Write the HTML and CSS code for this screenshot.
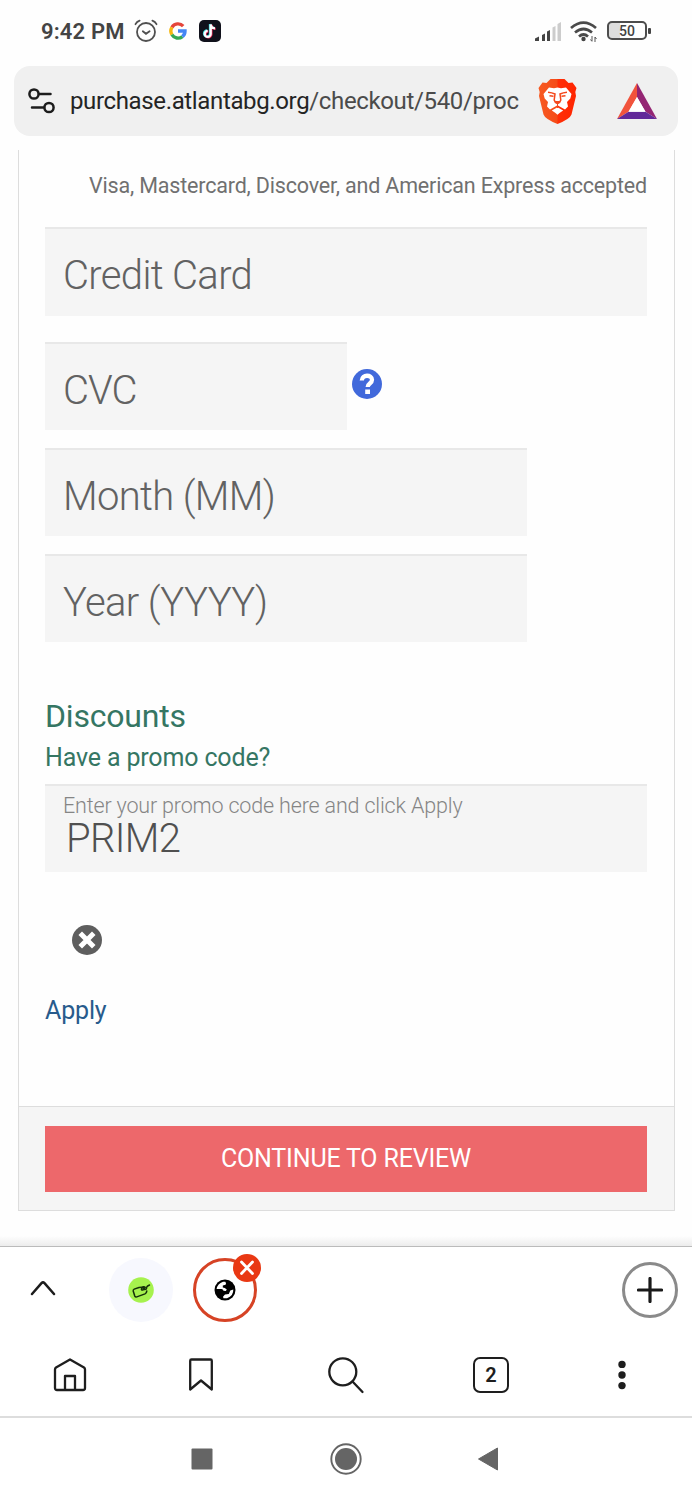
FILE: index.html
```
<!DOCTYPE html>
<html lang="en">
<head>
<meta charset="utf-8">
<title>Checkout</title>
<link rel="stylesheet" href="styles.css">
</head>
<body>
<header class="status">
  <span class="time">9:42 PM</span>
  <svg class="alarm" width="24" height="24" viewBox="0 0 24 24" fill="none" stroke="#505050" stroke-width="1.8" stroke-linecap="round"><circle cx="12" cy="13" r="9"/><path d="M1.500 5.200Q2.800 2.600 5.600 1.600M22.500 5.200Q21.200 2.600 18.400 1.600M8.800 12.200 12 14.800 15.600 12.200"/></svg>
  <svg class="google" width="18" height="18" viewBox="0 0 18 18" fill="none" stroke-width="3.400"><path d="M2.900 5.400A7.100 7.100 0 0 1 14.200 4.100" stroke="#e5453a"/><path d="M2.900 5.400a7.200 7.200 0 0 0 0 7.300" stroke="#f5b70f"/><path d="M2.900 12.700A7.100 7.100 0 0 0 13.400 14.600" stroke="#35a854"/><path d="M13.400 14.600A7 7 0 0 0 16 9H9" stroke="#4385f4"/></svg>
  <svg class="tiktok" width="22" height="22" viewBox="0 0 22 22"><rect width="22" height="22" rx="5" fill="#10111b"/><g fill="none" stroke-width="2.300"><path d="M11 4v9.500a3 3 0 1 1-3-3M11 4c.3 2.500 1.800 3.800 4.300 4" stroke="#35d8dc"/><path d="M12.400 4.800v9.500a3 3 0 1 1-3-3M12.400 4.800c.3 2.500 1.800 3.800 4.300 4" stroke="#ef2858"/><path d="M11.700 4.400v9.500a3 3 0 1 1-3-3M11.700 4.400c.3 2.500 1.800 3.800 4.300 4" stroke="#fff"/></g></svg>
  <span class="spacer"></span>
  <svg class="signal" width="26" height="19" viewBox="0 0 26 19"><path d="M0 19v-2.500l4-2V19zM7 19v-6l3-1.500V19zM12 19V9.500L15 8v11z" fill="#444"/><path d="M17.500 19V5.500L20.500 4v15zM22.500 19V2L26 0v19z" fill="#ccc"/></svg>
  <svg class="wifi" width="28" height="22" viewBox="0 0 28 22"><g fill="none" stroke="#4a4a4a" stroke-width="2.700"><path d="M1 7Q13.500-3.600 26 7M5 11.500q8.500-7 17 0M9 15.500q4.500-4 9 0"/></g><circle cx="13.500" cy="18" r="2.200" fill="#444"/><path d="M22 15v5M20.500 18.500l1.500 2M25 21v-5M25 16l1.500 2" stroke="#555" fill="none"/></svg>
  <div class="battery"><span class="battery-box">50</span><i class="battery-tip"></i></div>
</header>

<div class="urlbar">
  <svg class="tune" width="28" height="26" viewBox="0 0 28 26" fill="none" stroke="#1c1c1c" stroke-width="2.500" stroke-linecap="round"><circle cx="6" cy="6" r="4.600"/><path d="M11 6h11.500M4 19.500h12"/><circle cx="21" cy="19.500" r="4.600"/></svg>
  <div class="url">purchase.atlantabg.org<span class="path">/checkout/540/proc</span></div>
  <svg class="brave" width="39" height="45" viewBox="0 0 39 45"><defs><linearGradient id="lion"><stop offset="0" stop-color="#f75a22"/><stop offset=".48" stop-color="#f54c18"/><stop offset=".52" stop-color="#ff2f08"/><stop offset="1" stop-color="#ff2500"/></linearGradient></defs><path fill="url(#lion)" d="M12.500 0h14l4 4 4-.5 4 5.500-1.200 4 .7 4-4.500 18.500Q32 40 19.500 45 7 40 5.500 35.500L1 17l.7-4L.5 9l4-5.500 4 .5z"/><path fill="#fff" d="M11 8.500l5 .7 3.500-.7 3.500.7 5-.7L33.500 15l-1.200 4.500L29 23l1 4.500-3 3-4-2.300-3.500-2-3.500 2-4 2.300-3-3L10 23l-3.300-3.500L5.500 15zM13.800 31.500l5.700-3.200 5.700 3.200-3.700 2.600-2 1.600-2-1.600z"/><path d="M10 13.200q4 .3 7 1.800l-.8 6q.5 2.500 3.300 3.500 2.800-1 3.300-3.500l-.8-6q3-1.500 7-1.800M11.500 16.700l4 .5M27.500 16.700l-4 .5" fill="none" stroke="#f4481c" stroke-width="1.500"/><path d="M16.700 22h5.600l-2.800 3.800zM19 24h1v5h-1z" fill="#f4481c"/></svg>
  <svg class="bat" width="40" height="36" viewBox="0 0 40 36"><path d="M20 0 0 36l11.500-7.200L20 14z" fill="#f1533c"/><path d="M20 0v14l8.500 14.800L40 36z" fill="#942573"/><path d="M0 36l11.500-7.200h17L40 36z" fill="#622899"/><path d="M20 14l-8.500 14.800h17z" fill="#fff"/></svg>
</div>

<main class="page">
  <form class="card">
    <div class="fields">
      <p class="accepted"><span>Visa, Mastercard, Discover, and American Express accepted</span></p>
      <div class="field card-number"><span>Credit Card</span></div>
      <div class="cvc-row">
        <div class="field cvc"><span>CVC</span></div>
        <svg width="30" height="30" viewBox="0 0 30 30"><circle cx="15" cy="15" r="15" fill="#4169db"/><path d="M9.800 11.500C10 5.200 20 5.400 20 10.800c0 4-4.300 3.500-4.300 7.200" fill="none" stroke="#fff" stroke-width="4.300"/><path d="M13.200 20.500h4.800v4.500h-4.800z" fill="#fff"/></svg>
      </div>
      <div class="field date"><span>Month (MM)</span></div>
      <div class="field date"><span>Year (YYYY)</span></div>
      <h2><span>Discounts</span></h2>
      <h3><span>Have a promo code?</span></h3>
      <div class="field promo"><label>Enter your promo code here and click Apply</label><span class="code">PRIM2</span></div>
      <svg class="clear" width="30" height="30" viewBox="0 0 30 30"><circle cx="15" cy="15" r="15" fill="#5e5e5e"/><path d="M10 10l10 10M20 10 10 20" stroke="#fff" stroke-width="5" stroke-linecap="square" stroke-linejoin="round"/></svg>
      <a class="apply"><span>Apply</span></a>
    </div>
    <div class="card-footer"><div class="continue"><span>CONTINUE TO REVIEW</span></div></div>
  </form>
</main>

<div class="tabs">
  <svg class="chevron" width="26" height="16" viewBox="0 0 26 16" fill="none" stroke="#1c1c1c" stroke-width="2.500" stroke-linecap="round" stroke-linejoin="round"><path d="M2 14 11.500 3.200q1.500-1.500 3 0L24 14"/></svg>
  <div class="tab"><svg width="26" height="26" viewBox="0 0 26 26"><circle cx="13" cy="13" r="12.800" fill="#a6f24e"/><path d="M11 10.500l-4.800 1.600q-1.300.6-1 2l1.600 5q.6 1.200 2 .8l8.200-3q1.700-.8 1.800-3M11 10.500q3.500-.2 4.500-.8 2.500-.2 1 2-2 2-3 1-.6-2 2-1.700M16 12.500q3 .5 2.500-2 .5-1.500 3-2.500" fill="none" stroke="#153009" stroke-width="1.500" stroke-linecap="round"/></svg></div>
  <div class="tab active"><svg width="22" height="22" viewBox="0 0 22 22"><circle cx="11" cy="11" r="10.500"/><path fill="#fff" d="M9 2.700Q3.500 4.500 2.600 10h4.900q1.500.2 2 1.700l2.300.3 1-1.500-2-1.500-2-.5V6.500l2.800-.8q1-1.500-.3-3zM19.300 10.500q.3 6.500-6.300 8.700l-3.500.1-.5-1.600 2-2.200 3.800-.5 1.500-3.500z"/></svg>
    <svg class="close" width="28" height="28" viewBox="0 0 28 28"><circle cx="14" cy="14" r="14" fill="#e93813"/><path d="M8.500 8l11 11.500M19.500 8l-11 11.500" stroke="#fff" stroke-width="2.800" stroke-linecap="round"/></svg></div>
  <div class="new-tab"><svg width="26" height="26" viewBox="0 0 26 26"><path d="M13 1.500v23M1.500 13h23" stroke="#1a1a1a" stroke-width="3.200" stroke-linecap="round"/></svg></div>
</div>

<nav class="toolbar">
  <svg width="34" height="34" viewBox="0 0 34 34" fill="none" stroke="#1e1e1e" stroke-width="2.300" stroke-linejoin="round"><path d="M17 1.500 31 9.500q1 .7 1 2V30q0 2-2 2H4q-2 0-2-2V11.500q0-1.300 1-2zM12 32V18h10v14"/></svg>
  <svg width="26" height="34" viewBox="0 0 26 34" fill="none" stroke="#1e1e1e" stroke-width="2.300" stroke-linejoin="round"><path d="M3.500 1.500h19q1.300 0 1.300 1.300V31.500L13 22.500 2.200 31.500V2.800q0-1.300 1.300-1.300z"/></svg>
  <svg width="38" height="38" viewBox="0 0 38 38" fill="none" stroke="#1e1e1e" stroke-width="2.300" stroke-linecap="round"><circle cx="15.800" cy="15.800" r="13.500"/><path d="M25.500 25.500 35.500 36"/></svg>
  <span class="count">2</span>
  <svg width="8" height="30" viewBox="0 0 8 30" fill="#1e1e1e"><circle cx="4" cy="4.400" r="3.700"/><circle cx="4" cy="15" r="3.700"/><circle cx="4" cy="25.600" r="3.700"/></svg>
</nav>

<footer class="system">
  <svg width="22" height="22" viewBox="0 0 22 22"><rect x=".5" y=".5" width="21" height="21" rx="1" fill="#656565"/></svg>
  <svg width="32" height="32" viewBox="0 0 32 32"><circle cx="16" cy="16" r="14.700" fill="none" stroke="#656565" stroke-width="1.900"/><circle cx="16" cy="16" r="11" fill="#656565"/></svg>
  <svg width="22" height="24" viewBox="0 0 22 24"><path d="M1.500 12 20.500 1v22z" fill="#656565" stroke="#656565" stroke-linejoin="round"/></svg>
</footer>
</body>
</html>
```
FILE: styles.css
```
* { box-sizing: border-box; }
body { margin: 0; width: 692px; height: 1500px; overflow: hidden; background: #fefefe; font-family: Roboto, "Liberation Sans", sans-serif; display: flex; flex-direction: column; }
svg { display: block; flex: none; }
h2, h3, p { margin: 0; font-weight: 400; }
.status { height: 66px; padding: 0 41px; display: flex; align-items: center; color: #444; flex: none; }
.time { font-size: 22px; font-weight: 600; letter-spacing: .15px; width: 93px; line-height: 24px; margin-top: -3px; white-space: nowrap; }
.alarm { margin-top: -5px; }
.google { margin: -4px 0 0 11px; }
.tiktok { margin: -4px 0 0 12px; }
.spacer { flex: 1; }
.signal { margin-top: -4px; }
.wifi { margin: -3px 0 0 9px; }
.battery { display: flex; align-items: center; gap: 1px; margin: -5px 0 0 9px; }
.battery-box { width: 40px; height: 19px; border: 2px solid #4d4d4d; border-radius: 5px; background: linear-gradient(90deg, #ddd 11px, #fff 11px); font-size: 14px; font-weight: 500; line-height: 17px; text-align: center; }
.battery-tip { width: 3px; height: 6px; border-radius: 1px; background: #444; }
.urlbar { margin: 0 14px; height: 70px; flex: none; border-radius: 16px; background: #f0f0f0; display: flex; align-items: center; padding: 0 20px 0 14px; }
.tune { margin-top: -1px; }
.url { margin-left: 14px; width: 468px; font-size: 24px; letter-spacing: -.36px; color: #242424; white-space: nowrap; }
.path { color: #4b4b4b; }
.bat { margin-left: 40px; }
.page { margin-top: 14px; height: 1096px; flex: none; padding: 0 17px 0 18px; background: linear-gradient(#fefefe 1086px, #ececec 1096px); }
.card { height: 1061px; border: 1px solid #ddd; border-top: 0; background: #fefefe; display: flex; flex-direction: column; }
.fields { height: 957px; padding: 22px 27px 0 26px; display: flex; flex-direction: column; align-items: flex-start; }
.accepted { align-self: flex-end; height: 28px; line-height: 28px; font-size: 21.5px; letter-spacing: -.18px; color: #707070; white-space: nowrap; }
.field { height: 89px; background: #f5f5f5; border-top: 2px solid #e8e8e8; padding-left: 18px; font-size: 40px; font-weight: 300; letter-spacing: -.65px; line-height: 93px; color: #626262; white-space: nowrap; }
.card-number { width: 602px; margin-top: 27px; }
.cvc-row { display: flex; margin-top: 26px; gap: 5px; }
.cvc { width: 302px; height: 88px; margin-bottom: 1px; letter-spacing: -1px; }
.cvc-row svg { margin-top: 27px; }
.date { width: 482px; height: 88px; margin-top: 17px; }
.date + .date { margin-top: 18px; }
h2 { margin-top: 55px; height: 38px; line-height: 38px; font-size: 32px; letter-spacing: -.2px; color: #357663; }
h3 { margin-top: 6px; height: 32px; line-height: 33px; font-size: 25px; letter-spacing: -.15px; color: #357663; }
.promo { width: 602px; height: 88px; margin-top: 11px; display: flex; flex-direction: column; }
.promo label { height: 28px; margin-top: 5px; line-height: 29px; font-size: 21.5px; letter-spacing: -.17px; color: #858585; }
.code { height: 40px; line-height: 40px; padding-left: 3px; color: #505050; }
.clear { margin: 53px 0 0 26.5px; }
.apply { margin-top: 41px; line-height: 30px; font-size: 25px; letter-spacing: -.15px; color: #285b8c; }
.card-footer { height: 104px; border-top: 1px solid #ddd; background: #f5f5f5; padding: 19px 27px 0 26px; }
.continue { height: 66px; background: #ed686b; color: #fff; text-align: center; line-height: 66px; font-size: 25px; letter-spacing: -.18px; }
.tabs { height: 88px; flex: none; display: flex; align-items: center; border-top: 1px solid #bbb; padding: 0 14px 2px 30px; background: #fff; }
.chevron { margin-top: -4px; }
.tab { width: 64px; height: 64px; margin-left: 53px; border-radius: 50%; background: #f7f8fe; display: grid; place-items: center; }
.tab.active { margin-left: 20px; border: 3px solid #d64325; background: #fff; position: relative; }
.close { position: absolute; top: -7px; right: -7px; }
.new-tab { margin-left: auto; width: 56px; height: 56px; border: 3px solid #8a8a8a; border-radius: 50%; display: grid; place-items: center; }
.toolbar { height: 84px; flex: none; border-bottom: 2px solid #ddd; background: #fff; display: grid; grid-template-columns: 140px 122px 168px 122px 140px; place-items: center; }
.count { width: 36px; height: 36px; border: 2px solid #1e1e1e; border-radius: 7px; text-align: center; font-size: 20px; font-weight: 600; line-height: 33px; color: #1e1e1e; }
.system { height: 82px; flex: none; background: #fff; display: grid; grid-template-columns: 144px 144px 140px; padding-left: 130px; place-items: center; }
```
